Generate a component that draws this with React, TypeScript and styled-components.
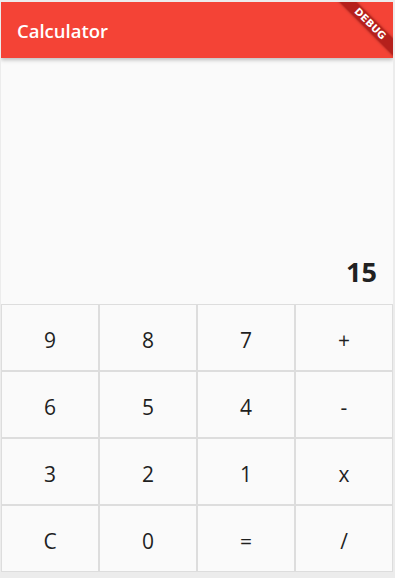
import styled, { createGlobalStyle } from 'styled-components';

const GlobalStyle = createGlobalStyle`
  html, body {
    margin: 0;
    padding: 0;
    background: #ececec;
  }
  body {
    font-family: "Open Sans", "Noto Sans", sans-serif;
  }
`;

const Frame = styled.div`
  padding: 2px 2px 0 1px;
  box-sizing: border-box;
  width: 395px;
  height: 578px;
`;

const AppShell = styled.div`
  position: relative;
  width: 392px;
  height: 570px;
  background: #fafafa;
  display: flex;
  flex-direction: column;
  overflow: hidden;
`;

const AppBar = styled.header`
  height: 56px;
  flex: 0 0 56px;
  background: #f44336;
  display: flex;
  align-items: center;
  padding: 0 16px;
  box-shadow: 0 2px 4px rgba(0, 0, 0, 0.25);
  position: relative;
  z-index: 1;
`;

const Title = styled.h1`
  margin: 0;
  color: #ffffff;
  font-size: 18.5px;
  font-weight: 600;
`;

const Display = styled.div`
  flex: 1;
  display: flex;
  align-items: flex-end;
  justify-content: flex-end;
  padding: 0 16px 19px;
`;

const Result = styled.span`
  font-size: 27px;
  font-weight: 700;
  color: #212121;
  line-height: 1;
`;

const Keypad = styled.div`
  display: grid;
  grid-template-columns: repeat(4, 98px);
  grid-auto-rows: 67px;
  flex: 0 0 268px;
`;

const Key = styled.button`
  box-sizing: border-box;
  border: 1px solid #dddddd;
  background: #fafafa;
  font-family: inherit;
  font-size: 21px;
  color: #1f1f1f;
  padding: 5px 0 0;
  display: flex;
  align-items: center;
  justify-content: center;
  cursor: pointer;
`;

const BannerClip = styled.div`
  position: absolute;
  top: 0;
  right: 0;
  width: 80px;
  height: 80px;
  overflow: hidden;
  pointer-events: none;
  z-index: 2;
`;

const Banner = styled.div`
  position: absolute;
  left: -3px;
  top: 16px;
  width: 120px;
  height: 12px;
  transform: rotate(45deg);
  background: rgba(160, 20, 20, 0.75);
  box-shadow: 0 0 3px rgba(0, 0, 0, 0.35);
  color: #ffffff;
  font-family: "DejaVu Sans", sans-serif;
  font-size: 10px;
  font-weight: 700;
  line-height: 12px;
  text-align: center;
  letter-spacing: 0.2px;
`;

const keys = ['9', '8', '7', '+', '6', '5', '4', '-', '3', '2', '1', 'x', 'C', '0', '=', '/'];

export default function App() {
  return (
    <>
      <GlobalStyle />
      <Frame>
        <AppShell>
          <AppBar>
            <Title>Calculator</Title>
          </AppBar>
          <Display>
            <Result>15</Result>
          </Display>
          <Keypad>
            {keys.map((k) => (
              <Key key={k}>{k}</Key>
            ))}
          </Keypad>
          <BannerClip aria-hidden="true">
            <Banner>DEBUG</Banner>
          </BannerClip>
        </AppShell>
      </Frame>
    </>
  );
}
